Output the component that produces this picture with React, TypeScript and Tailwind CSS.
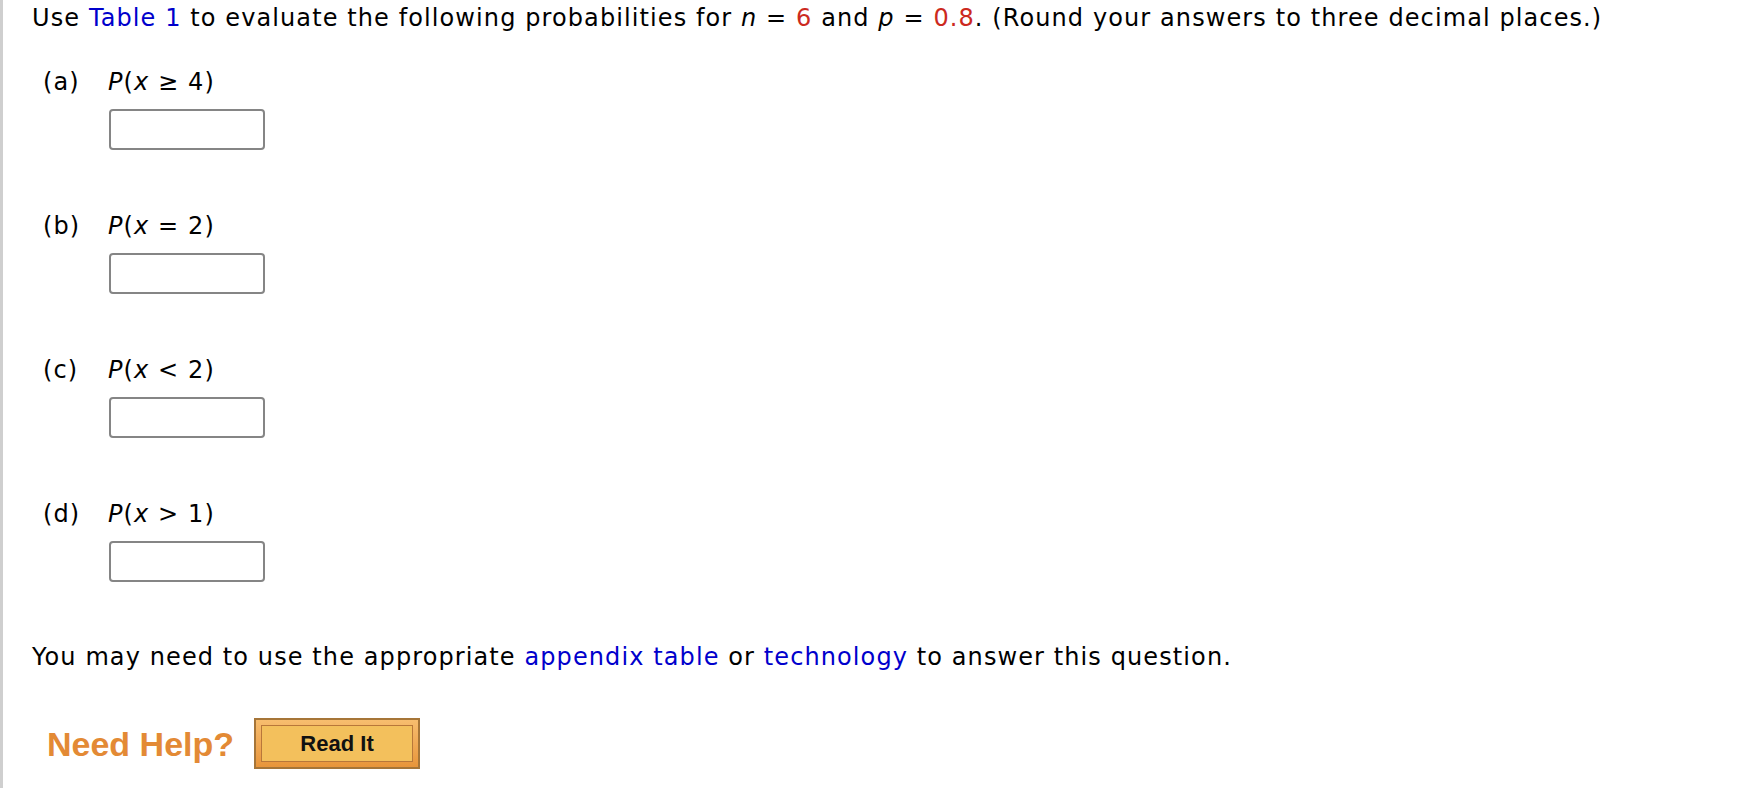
import React from 'react'

const parts = [
  { key: 'a', label: '(a)', rel: '≥', value: '4' },
  { key: 'b', label: '(b)', rel: '=', value: '2' },
  { key: 'c', label: '(c)', rel: '<', value: '2' },
  { key: 'd', label: '(d)', rel: '>', value: '1' },
]

function AnswerRow({ label, rel, value }: { label: string; rel: string; value: string }) {
  return (
    <div>
      <div className="flex h-[36px] items-center leading-[36px]">
        <span className="ml-[11px] w-[65px]">{label}</span>
        <span>
          <i>P</i>(<i>x</i> {rel} {value})
        </span>
      </div>
      <input
        type="text"
        className="ml-[77px] mt-[9px] block h-[41px] w-[156px] rounded-[4px] border-2 border-[#858585] bg-white px-2 outline-none"
      />
    </div>
  )
}

export default function App() {
  return (
    <div className="min-h-screen border-l-[3px] border-[#cfcfcf] bg-white pl-[29px] text-[24px] leading-[36px] tracking-[1.1px] text-black [font-family:Verdana,'DejaVu_Sans',sans-serif]">
      <p>
        Use <span className="text-[#0000cc]">Table 1</span> to evaluate the following probabilities for{' '}
        <i>n</i> = <span className="text-[#cc2a1e]">6</span> and <i>p</i> ={' '}
        <span className="text-[#cc2a1e]">0.8</span>. (Round your answers to three decimal places.)
      </p>

      <div className="mt-[28px] flex flex-col gap-[58px]">
        {parts.map((p) => (
          <AnswerRow key={p.key} label={p.label} rel={p.rel} value={p.value} />
        ))}
      </div>

      <p className="mt-[57px]">
        You may need to use the appropriate <span className="text-[#0000cc]">appendix table</span> or{' '}
        <span className="text-[#0000cc]">technology</span> to answer this question.
      </p>

      <div className="mt-[43px] flex items-center gap-[20px] pl-[15px] tracking-normal">
        <span className="text-[34px] font-bold leading-none text-[#e38a35] [font-family:'Liberation_Sans',Arial,sans-serif]">
          Need Help?
        </span>
        <button
          type="button"
          className="flex h-[51px] w-[166px] items-center justify-center border-2 border-[#a67538] bg-gradient-to-b from-[#f7bd6e] to-[#e8953a] p-[5px]"
        >
          <span className="flex h-full w-full items-center justify-center border border-[#b8773a] bg-[#f3c05c] text-[22px] font-bold text-[#111] [font-family:'Liberation_Sans',Arial,sans-serif]">
            Read It
          </span>
        </button>
      </div>
    </div>
  )
}
